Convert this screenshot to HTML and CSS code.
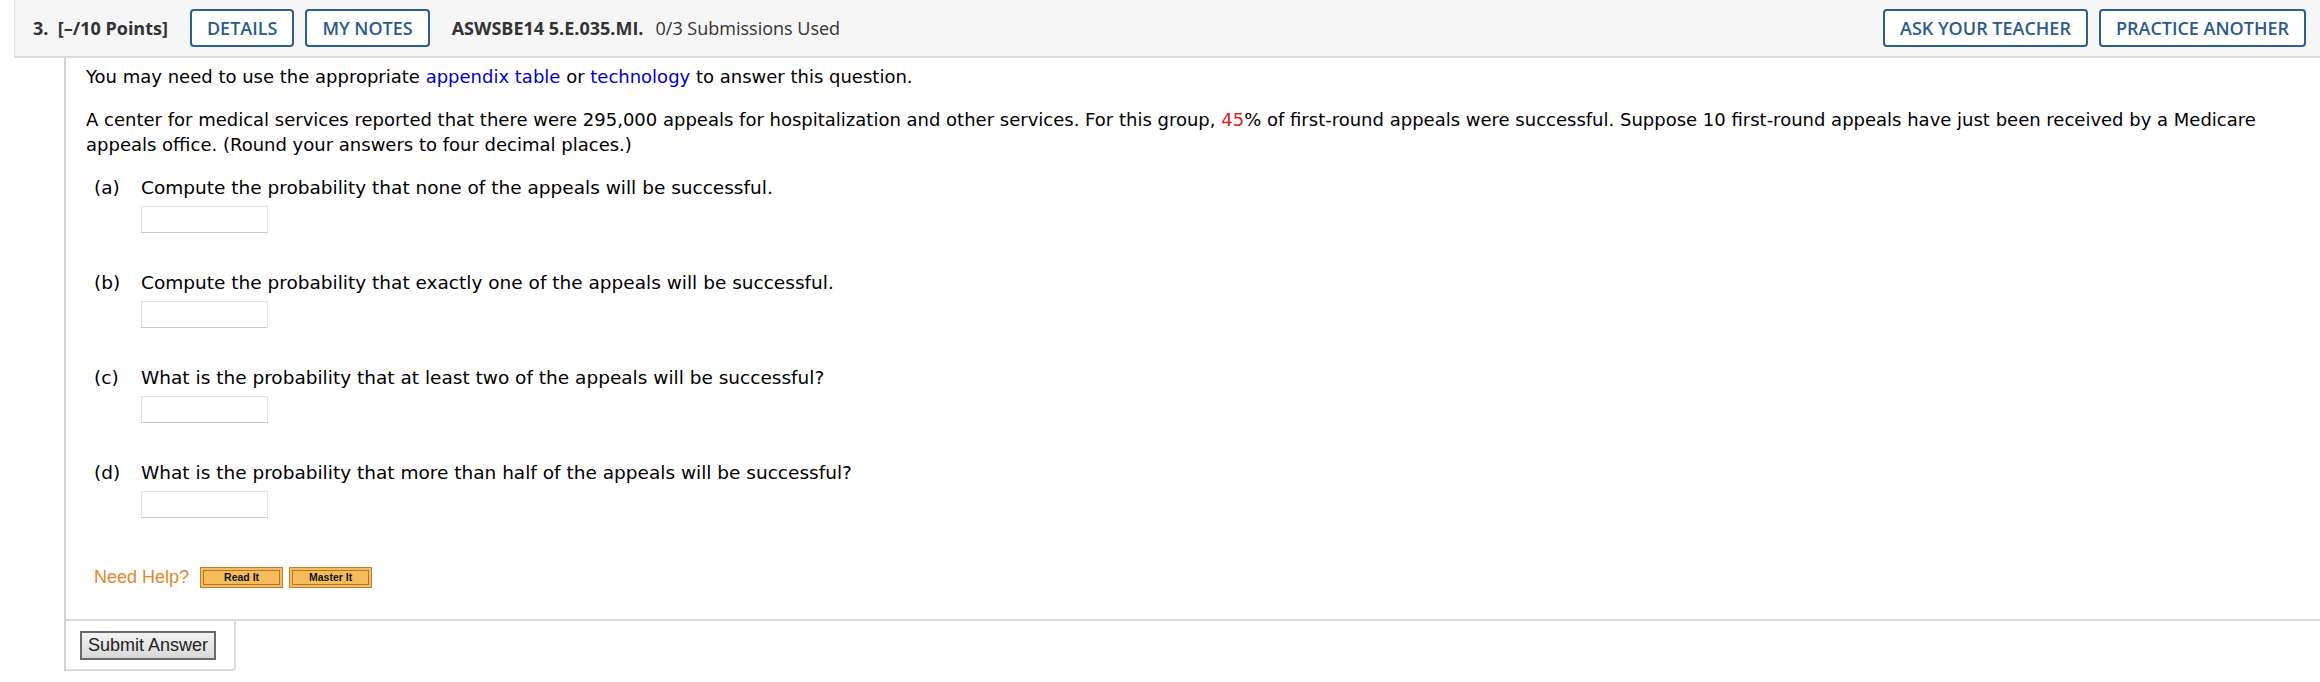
FILE: index.html
```html
<!DOCTYPE html>
<html>
<head>
<meta charset="utf-8">
<link rel="stylesheet" href="styles.css">
</head>
<body>
<div class="question">
  <div class="qhead">
    <span class="qnum">3.&nbsp; [–/10 Points]</span>
    <button class="hbtn">DETAILS</button>
    <button class="hbtn">MY NOTES</button>
    <span class="qid">ASWSBE14 5.E.035.MI.</span>
    <span class="subs">0/3 Submissions Used</span>
    <span class="spacer"></span>
    <button class="hbtn">ASK YOUR TEACHER</button>
    <button class="hbtn last">PRACTICE ANOTHER</button>
  </div>
  <div class="qbody">
    <div class="content">
      <p class="intro">You may need to use the appropriate <a class="link">appendix table</a> or <a class="link">technology</a> to answer this question.</p>
      <p class="stem">A center for medical services reported that there were 295,000 appeals for hospitalization and other services. For this group, <span class="red">45</span>% of first-round appeals were successful. Suppose 10 first-round appeals have just been received by a Medicare appeals office. (Round your answers to four decimal places.)</p>
      <div class="part">
        <div class="plabel"><span class="pl">(a)</span><span>Compute the probability that none of the appeals will be successful.</span></div>
        <div class="ans"><input class="box" type="text"></div>
      </div>
      <div class="part">
        <div class="plabel"><span class="pl">(b)</span><span>Compute the probability that exactly one of the appeals will be successful.</span></div>
        <div class="ans"><input class="box" type="text"></div>
      </div>
      <div class="part">
        <div class="plabel"><span class="pl">(c)</span><span>What is the probability that at least two of the appeals will be successful?</span></div>
        <div class="ans"><input class="box" type="text"></div>
      </div>
      <div class="part">
        <div class="plabel"><span class="pl">(d)</span><span>What is the probability that more than half of the appeals will be successful?</span></div>
        <div class="ans"><input class="box" type="text"></div>
      </div>
      <div class="help">
        <span class="needhelp">Need Help?</span>
        <button class="hb">Read It</button>
        <button class="hb">Master It</button>
      </div>
    </div>
    <div class="foot">
      <button class="submit">Submit Answer</button>
    </div>
  </div>
</div>
</body>
</html>
```

FILE: styles.css
```css
* { box-sizing: border-box; }
body {
  margin: 0;
  background: #fff;
  font-family: "DejaVu Sans", Verdana, sans-serif;
  color: #000;
}
.question {
  margin-left: 14px;
}
.qhead {
  display: flex;
  align-items: center;
  height: 58px;
  background: #f6f6f6;
  border-left: 1px solid #e0e0e0;
  border-bottom: 2px solid #dcdcdc;
  padding-left: 18px;
  padding-right: 14px;
  font-family: "Open Sans", sans-serif;
  color: #333;
}
.qnum {
  font-weight: 700;
  font-size: 18px;
  margin-right: 22px;
}
.hbtn {
  font-family: "Open Sans", sans-serif;
  font-weight: 600;
  font-size: 18px;
  color: #2b5b8c;
  background: #fff;
  border: 2px solid #2b5f94;
  border-radius: 4px;
  height: 38px;
  padding: 0 15px;
  margin-right: 11px;
  cursor: pointer;
}
.hbtn.last { margin-right: 0; }
.qid {
  font-weight: 700;
  font-size: 18px;
  margin-left: 11px;
  margin-right: 12px;
}
.subs {
  font-size: 18px;
}
.spacer { flex: 1; }
.qbody {
  margin-left: 50px;
  border-left: 2px solid #d4d4d4;
}
.content {
  padding: 6px 10px 31px 20px;
  border-bottom: 2px solid #dcdcdc;
}
p {
  margin: 0;
  font-size: 18px;
  line-height: 25px;
}
.intro { margin-bottom: 18px; }
.stem { margin-bottom: 18px; }
.link { color: #0000cc; text-decoration: none; }
.red { color: #e02020; }
.part {
  margin-bottom: 37px;
}
.plabel {
  display: flex;
  font-size: 18.5px;
  line-height: 26px;
  padding-left: 8px;
}
.pl { width: 47px; }
.ans {
  padding-left: 55px;
  margin-top: 5px;
}
.box {
  display: block;
  width: 127px;
  height: 27px;
  border: 1px solid #e2e2e2;
  border-bottom: 1px solid #c8c8c8;
  background: #fff;
  border-radius: 1px;
}
.help {
  display: flex;
  align-items: center;
  padding-left: 8px;
  margin-top: 48px;
  height: 22px;
}
.needhelp {
  font-family: "Liberation Sans", Arial, sans-serif;
  font-size: 18px;
  color: #e2872c;
  margin-right: 11px;
}
.hb {
  font-family: "Liberation Sans", Arial, sans-serif;
  font-weight: 700;
  font-size: 10.5px;
  color: #111;
  width: 83px;
  height: 21px;
  margin-right: 6px;
  background: #f4bd5a;
  border: 1px solid #c47e33;
  box-shadow: inset 0 0 0 2px #f4bd5a, inset 0 0 0 3px #b07436;
  padding: 0;
  cursor: pointer;
}
.foot {
  width: 170px;
  height: 50px;
  border-right: 2px solid #dcdcdc;
  border-bottom: 2px solid #dcdcdc;
  border-bottom-right-radius: 4px;
  padding: 10px 0 0 14px;
}
.submit {
  font-family: "Liberation Sans", Arial, sans-serif;
  font-size: 18px;
  color: #222;
  width: 136px;
  height: 29px;
  padding: 0;
  border: 2px solid #6a6a6a;
  background: linear-gradient(#f3f3f3, #d9d9d9);
  cursor: pointer;
}
```
